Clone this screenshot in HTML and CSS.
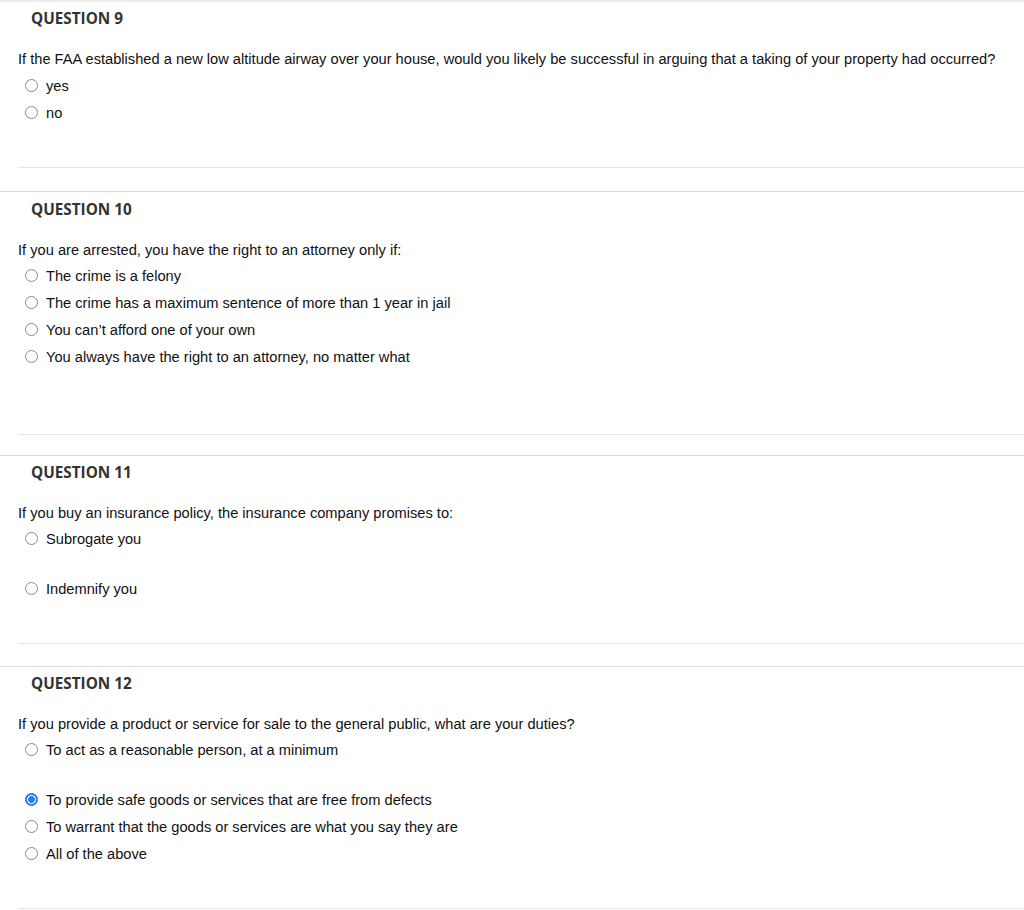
FILE: index.html
```html
<!DOCTYPE html>
<html>
<head>
<meta charset="utf-8">
<link rel="stylesheet" href="styles.css">
</head>
<body>
<div class="question first">
  <div class="body">
    <h3 class="title">QUESTION 9</h3>
    <p class="text">If the FAA established a new low altitude airway over your house, would you likely be successful in arguing that a taking of your property had occurred?</p>
    <ul class="options">
      <li class="option"><span class="radio"></span>yes</li>
      <li class="option"><span class="radio"></span>no</li>
    </ul>
  </div>
</div>
<div class="question second">
  <div class="body">
    <h3 class="title">QUESTION 10</h3>
    <p class="text">If you are arrested, you have the right to an attorney only if:</p>
    <ul class="options">
      <li class="option"><span class="radio"></span>The crime is a felony</li>
      <li class="option"><span class="radio"></span>The crime has a maximum sentence of more than 1 year in jail</li>
      <li class="option"><span class="radio"></span>You can’t afford one of your own</li>
      <li class="option spaced"><span class="radio"></span>You always have the right to an attorney, no matter what</li>
    </ul>
  </div>
</div>
<div class="question">
  <div class="body">
    <h3 class="title">QUESTION 11</h3>
    <p class="text">If you buy an insurance policy, the insurance company promises to:</p>
    <ul class="options">
      <li class="option spaced"><span class="radio"></span>Subrogate you</li>
      <li class="option"><span class="radio"></span>Indemnify you</li>
    </ul>
  </div>
</div>
<div class="question">
  <div class="body">
    <h3 class="title">QUESTION 12</h3>
    <p class="text">If you provide a product or service for sale to the general public, what are your duties?</p>
    <ul class="options">
      <li class="option spaced"><span class="radio"></span>To act as a reasonable person, at a minimum</li>
      <li class="option"><span class="radio checked"></span>To provide safe goods or services that are free from defects</li>
      <li class="option"><span class="radio"></span>To warrant that the goods or services are what you say they are</li>
      <li class="option"><span class="radio"></span>All of the above</li>
    </ul>
  </div>
</div>
</body>
</html>
```
FILE: styles.css
```css
html, body {
  margin: 0;
  padding: 0;
  background: #fff;
}
body {
  font-family: "Liberation Sans", Arial, sans-serif;
  font-size: 14.65px;
  color: #111;
}
.question {
  border-top: 1px solid #dcdcdc;
  padding-top: 6px;
  padding-bottom: 22px;
}
.question.first {
  border-top: 2px solid #ececec;
  padding-bottom: 23px;
}
.question.first .options {
  margin-top: 3px;
}
.question.second {
  padding-top: 7px;
  padding-bottom: 20px;
}
.body {
  margin-left: 18px;
  border-bottom: 1px solid #e6e6e6;
  padding-bottom: 41px;
}
.title {
  margin: 0 0 21px 13px;
  font-family: "Open Sans", sans-serif;
  font-weight: 700;
  font-size: 15.3px;
  line-height: 20px;
  color: #333;
}
.text {
  margin: 0;
  line-height: 20px;
}
.options {
  list-style: none;
  margin: 2px 0 0 0;
  padding: 0;
}
.option {
  display: flex;
  align-items: center;
  height: 27px;
  padding-left: 7px;
}
.option.spaced {
  margin-bottom: 23px;
}
.radio {
  box-sizing: border-box;
  width: 13px;
  height: 13px;
  border: 1px solid #8a8a8a;
  border-radius: 50%;
  background: #fff;
  margin-right: 8px;
  flex: none;
}
.radio.checked {
  border: 1px solid #1f6fe6;
  background: radial-gradient(circle, #2a7cf0 0 3.2px, #fff 3.6px 4.2px, #2a7cf0 4.6px);
}
```
